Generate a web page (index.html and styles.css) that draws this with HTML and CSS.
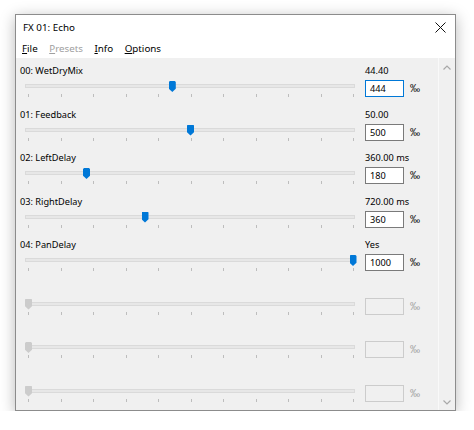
FILE: index.html
```html
<!DOCTYPE html>
<html>
<head>
<meta charset="utf-8">
<link rel="stylesheet" href="styles.css">
</head>
<body>
<div class="screen">
  <div class="window">
    <div class="titlebar">
      <span class="title">FX 01: Echo</span>
      <svg class="close" width="11" height="11" viewBox="0 0 11 11"><path d="M0.5 0.5 L10.5 10.5 M10.5 0.5 L0.5 10.5" stroke="#111" stroke-width="1" fill="none"/></svg>
    </div>
    <div class="menubar">
      <span class="menu"><u>F</u>ile</span>
      <span class="menu disabled"><u>P</u>resets</span>
      <span class="menu"><u>I</u>nfo</span>
      <span class="menu"><u>O</u>ptions</span>
    </div>
    <div class="client">
      <div class="rows">
        <div class="row">
          <div class="label">00: WetDryMix</div>
          <div class="value">44.40</div>
          <div class="slider"><div class="track"></div><div class="thumb" style="left:143.8px"></div><div class="ticks"><i></i><i></i><i></i><i></i><i></i><i></i><i></i><i></i><i></i><i></i><i></i></div></div>
          <div class="edit"><div class="box focus">444</div><span class="unit">‰</span></div>
        </div>
        <div class="row">
          <div class="label">01: Feedback</div>
          <div class="value">50.00</div>
          <div class="slider"><div class="track"></div><div class="thumb" style="left:162px"></div><div class="ticks"><i></i><i></i><i></i><i></i><i></i><i></i><i></i><i></i><i></i><i></i><i></i></div></div>
          <div class="edit"><div class="box">500</div><span class="unit">‰</span></div>
        </div>
        <div class="row">
          <div class="label">02: LeftDelay</div>
          <div class="value">360.00 ms</div>
          <div class="slider"><div class="track"></div><div class="thumb" style="left:58px"></div><div class="ticks"><i></i><i></i><i></i><i></i><i></i><i></i><i></i><i></i><i></i><i></i><i></i></div></div>
          <div class="edit"><div class="box">180</div><span class="unit">‰</span></div>
        </div>
        <div class="row">
          <div class="label">03: RightDelay</div>
          <div class="value">720.00 ms</div>
          <div class="slider"><div class="track"></div><div class="thumb" style="left:116.5px"></div><div class="ticks"><i></i><i></i><i></i><i></i><i></i><i></i><i></i><i></i><i></i><i></i><i></i></div></div>
          <div class="edit"><div class="box">360</div><span class="unit">‰</span></div>
        </div>
        <div class="row">
          <div class="label">04: PanDelay</div>
          <div class="value">Yes</div>
          <div class="slider"><div class="track"></div><div class="thumb" style="left:324.5px"></div><div class="ticks"><i></i><i></i><i></i><i></i><i></i><i></i><i></i><i></i><i></i><i></i><i></i></div></div>
          <div class="edit"><div class="box">1000</div><span class="unit">‰</span></div>
        </div>
        <div class="row off">
          <div class="label"></div>
          <div class="value"></div>
          <div class="slider"><div class="track"></div><div class="thumb" style="left:0px"></div><div class="ticks"><i></i><i></i><i></i><i></i><i></i><i></i><i></i><i></i><i></i><i></i><i></i></div></div>
          <div class="edit"><div class="box"></div><span class="unit">‰</span></div>
        </div>
        <div class="row off">
          <div class="label"></div>
          <div class="value"></div>
          <div class="slider"><div class="track"></div><div class="thumb" style="left:0px"></div><div class="ticks"><i></i><i></i><i></i><i></i><i></i><i></i><i></i><i></i><i></i><i></i><i></i></div></div>
          <div class="edit"><div class="box"></div><span class="unit">‰</span></div>
        </div>
        <div class="row off">
          <div class="label"></div>
          <div class="value"></div>
          <div class="slider"><div class="track"></div><div class="thumb" style="left:0px"></div><div class="ticks"><i></i><i></i><i></i><i></i><i></i><i></i><i></i><i></i><i></i><i></i><i></i></div></div>
          <div class="edit"><div class="box"></div><span class="unit">‰</span></div>
        </div>
      </div>
      <div class="scrollbar">
        <svg width="8" height="5" viewBox="0 0 8 5"><path d="M0.5 4.5 L4 1 L7.5 4.5" stroke="#a8a8a8" stroke-width="1.2" fill="none"/></svg>
        <svg width="8" height="5" viewBox="0 0 8 5"><path d="M0.5 0.5 L4 4 L7.5 0.5" stroke="#a8a8a8" stroke-width="1.2" fill="none"/></svg>
      </div>
    </div>
  </div>
</div>
</body>
</html>
```

FILE: styles.css
```css
html, body {
  margin: 0;
  background: #ffffff;
}
body {
  font-family: "Noto Sans", "Open Sans", sans-serif;
  font-size: 9.2px;
  color: #000;
}
.screen {
  padding: 14px 0 0 15px;
}
.window {
  width: 441px;
  height: 397px;
  box-sizing: border-box;
  border: 1px solid #8c8c8c;
  background: #ffffff;
  box-shadow: 0 3px 14px rgba(0, 0, 0, 0.28);
  display: flex;
  flex-direction: column;
}
.titlebar {
  height: 24px;
  flex: none;
  display: flex;
  align-items: center;
  justify-content: space-between;
  padding: 0 9px 0 7px;
}
.title {
  font-size: 9.8px;
}
.menubar {
  height: 19px;
  flex: none;
  display: flex;
  align-items: center;
  gap: 11.5px;
  padding-left: 6px;
  font-size: 9.8px;
}
.menu.disabled {
  color: #a0a0a0;
}
.client {
  flex: 1;
  display: flex;
  background: #f0f0f0;
  overflow: hidden;
}
.rows {
  flex: 1;
  padding-top: 5px;
}
.row {
  display: grid;
  grid-template-columns: 349px 1fr;
  grid-template-rows: 16px 27.5px;
}
.label {
  padding-left: 4px;
  line-height: 16px;
  white-space: nowrap;
}
.value {
  line-height: 16px;
  white-space: nowrap;
}
.slider {
  position: relative;
  margin-left: 9px;
  width: 330px;
}
.track {
  margin-top: 5px;
  height: 2px;
  border: 1px solid #dadada;
  background: #e7e7e7;
}
.thumb {
  position: absolute;
  top: 2px;
  width: 7px;
  height: 11px;
  background: #0078d7;
  clip-path: polygon(0 8%, 15% 0, 85% 0, 100% 8%, 100% 70%, 50% 100%, 0 70%);
}
.off .thumb {
  background: #cccccc;
}
.ticks {
  margin-top: 6px;
  margin-left: 3px;
  width: 326px;
  display: flex;
  justify-content: space-between;
}
.ticks i {
  display: block;
  width: 1px;
  height: 3px;
  background: #bdbdbd;
}
.edit {
  display: flex;
  align-items: center;
  gap: 6px;
  padding-top: 1px;
  align-self: start;
}
.box {
  width: 39px;
  height: 17px;
  box-sizing: border-box;
  border: 1px solid #7a7a7a;
  background: #ffffff;
  padding-left: 4px;
  line-height: 15px;
}
.box.focus {
  border-color: #0078d7;
}
.off .box {
  border-color: #cccccc;
  background: #f0f0f0;
}
.unit {
  font-family: "Liberation Sans", "DejaVu Sans", sans-serif;
  font-size: 10px;
  color: #000;
}
.off .unit {
  color: #a0a0a0;
}
.scrollbar {
  width: 16px;
  flex: none;
  border-left: 1px solid #f9f9f9;
  display: flex;
  flex-direction: column;
  justify-content: space-between;
  align-items: center;
  padding: 7px 0 5px;
}
```
